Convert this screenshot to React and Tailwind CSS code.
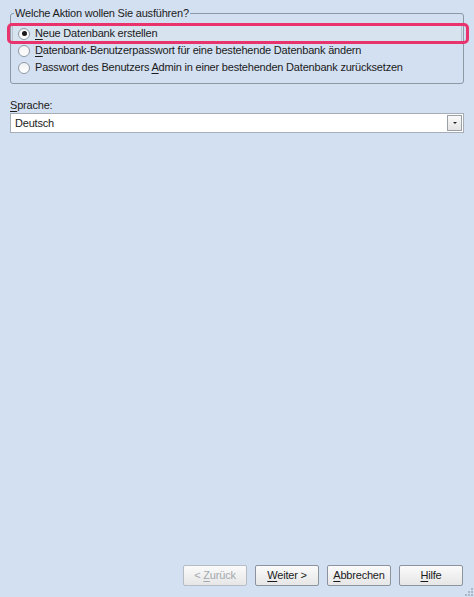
import React, { useState } from "react";

const font = { fontFamily: '"Liberation Sans", Arial, sans-serif' };

function Radio({ checked }) {
  return (
    <span className="relative flex h-[12px] w-[12px] shrink-0 items-center justify-center rounded-full border border-[#8f9aa8] bg-gradient-to-b from-[#f2f2f2] to-white">
      {checked && <span className="h-[5px] w-[5px] rounded-full bg-[#1a1a1a]" />}
    </span>
  );
}

function Mn({ children }) {
  return <span className="underline underline-offset-2">{children}</span>;
}

function Option({ checked, focused, onClick, children }) {
  return (
    <div
      onClick={onClick}
      className={`flex h-[17px] cursor-default items-center gap-[5px] pl-[5px] ${
        focused ? "border border-[#b9c2cc] bg-[#d8e3f0]" : "border border-transparent"
      }`}
    >
      <Radio checked={checked} />
      <span className="text-[11px] leading-none tracking-[-0.2px] text-[#1b1b1b]">{children}</span>
    </div>
  );
}

function Button({ disabled, children }) {
  return (
    <button
      disabled={disabled}
      className={`h-[21px] w-[64px] rounded-[2px] border bg-gradient-to-b from-[#fbfbfb] to-[#e6e6e6] text-[11px] leading-none tracking-[-0.2px] ${
        disabled ? "border-[#b6bcc4] text-[#a3a8ae]" : "border-[#8c949e] text-[#1b1b1b]"
      }`}
    >
      {children}
    </button>
  );
}

export default function App() {
  const [choice, setChoice] = useState(0);

  return (
    <div style={font} className="relative flex h-[597px] w-[474px] flex-col bg-[#d3e0f1] px-[10px]">
      {/* Action group */}
      <fieldset className="relative mt-[6px] rounded-[3px] border border-[#8e99a6] px-[1px] pb-[7px] pt-0">
        <legend className="ml-[2px] px-[1px] text-[11px] leading-[14px] tracking-[-0.2px] text-[#1b1b1b]">
          Welche Aktion wollen Sie ausführen?
        </legend>
        <div className="relative mt-[5px] flex flex-col">
          <Option checked={choice === 0} focused onClick={() => setChoice(0)}>
            <Mn>N</Mn>eue Datenbank erstellen
          </Option>
          <div className="pointer-events-none absolute -left-[5px] -right-[7px] -top-[2px] h-[21px] rounded-[5px] border-[3px] border-[#e8336d]" />
          <Option checked={choice === 1} onClick={() => setChoice(1)}>
            <Mn>D</Mn>atenbank-Benutzerpasswort für eine bestehende Datenbank ändern
          </Option>
          <Option checked={choice === 2} onClick={() => setChoice(2)}>
            Passwort des Benutzers <Mn>A</Mn>dmin in einer bestehenden Datenbank zurücksetzen
          </Option>
        </div>
      </fieldset>

      {/* Language */}
      <label className="mt-[14px] text-[11px] leading-[14px] tracking-[-0.2px] text-[#1b1b1b]">
        <Mn>S</Mn>prache:
      </label>
      <div className="mt-[1px] flex h-[20px] items-center border border-[#a7adb5] bg-white pl-[4px] pr-[1px]">
        <span className="flex-1 text-[11px] leading-none tracking-[-0.2px] text-[#1b1b1b]">Deutsch</span>
        <span className="flex h-[16px] w-[15px] items-center justify-center border border-[#9aa0a8] bg-gradient-to-b from-[#fafafa] to-[#e4e4e4]">
          <span className="h-0 w-0 border-x-[2px] border-t-[2px] border-x-transparent border-t-[#222]" />
        </span>
      </div>

      <div className="flex-1" />

      {/* Wizard buttons */}
      <div className="mb-[11px] flex justify-end gap-[8px] pr-[1px]">
        <Button disabled>
          {"< "}
          <Mn>Z</Mn>urück
        </Button>
        <Button>
          <Mn>W</Mn>eiter {">"}
        </Button>
        <Button>
          <Mn>A</Mn>bbrechen
        </Button>
        <Button>
          <Mn>H</Mn>ilfe
        </Button>
      </div>

      {/* Size grip */}
      <div className="absolute bottom-[1px] right-[1px] grid grid-cols-3 gap-[1px]">
        <span />
        <span />
        <span className="h-[2px] w-[2px] bg-[#a9b6c6]" />
        <span />
        <span className="h-[2px] w-[2px] bg-[#a9b6c6]" />
        <span className="h-[2px] w-[2px] bg-[#a9b6c6]" />
        <span className="h-[2px] w-[2px] bg-[#a9b6c6]" />
        <span className="h-[2px] w-[2px] bg-[#a9b6c6]" />
        <span className="h-[2px] w-[2px] bg-[#a9b6c6]" />
      </div>
    </div>
  );
}
